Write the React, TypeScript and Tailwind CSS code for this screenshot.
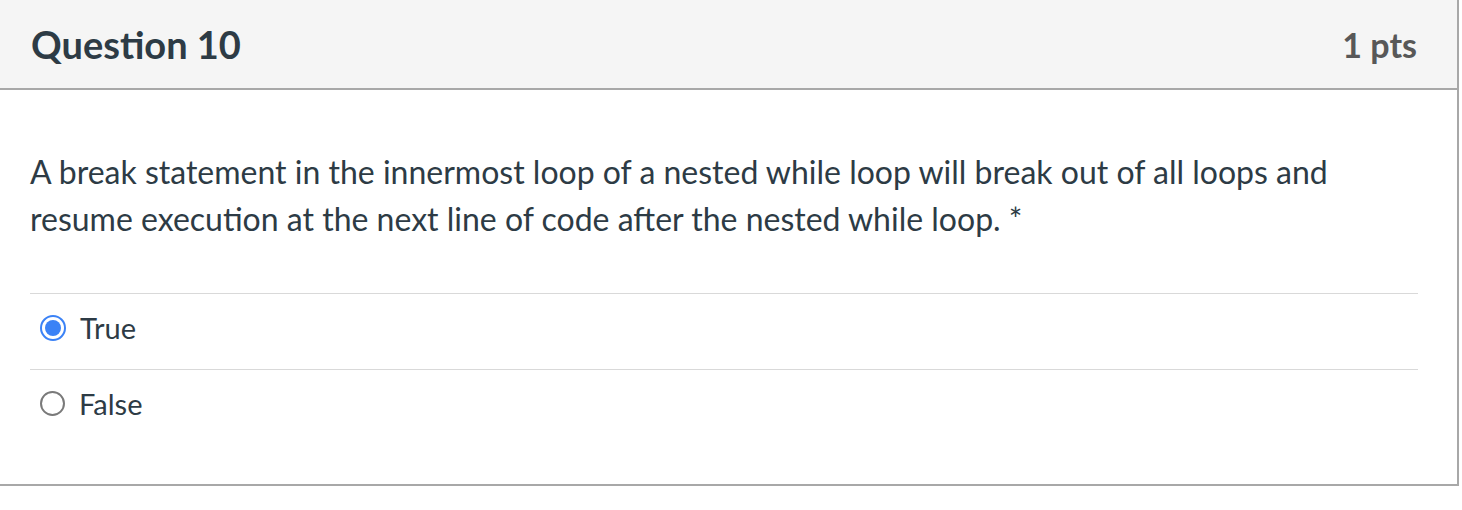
import React, { useState } from 'react';

const Radio = ({ checked }: { checked: boolean }) =>
    checked ? (
        <span className="flex h-[26px] w-[26px] shrink-0 items-center justify-center rounded-full border-[2px] border-[#3b82f6] bg-white">
            <span className="h-[16px] w-[16px] rounded-full bg-[#3b82f6]" />
        </span>
    ) : (
        <span className="h-[25px] w-[25px] shrink-0 rounded-full border-[2px] border-[#7a7a7a] bg-white" />
    );

export default function App() {
    const [answer, setAnswer] = useState('True');
    const options = ['True', 'False'];

    return (
        <div className="h-[510px] bg-white font-['Lato',sans-serif] text-[#2d3b45]">
            <div className="w-[1459px] border-r-2 border-b-2 border-[#a8a8a8]">
                <div className="flex h-[90px] items-center justify-between border-b-2 border-[#a8a8a8] bg-[#f5f5f5] pl-[31px] pr-[40px]">
                    <h2 className="text-[38px] font-bold">Question 10</h2>
                    <span className="text-[34px] font-bold text-[#585858]">1 pts</span>
                </div>
                <div className="pl-[30px] pr-[39px] pt-[58px] pb-[39px]">
                    <p className="text-[32px] leading-[47px]">
                        A break statement in the innermost loop of a nested while loop will break out of all loops and resume
                        execution at the next line of code after the nested while loop. *
                    </p>
                    <div className="mt-[51px]">
                        {options.map((opt) => (
                            <label
                                key={opt}
                                className="flex cursor-pointer items-center gap-[14px] border-t-[1.5px] border-[#d9d9d9] pl-[10px] pt-[10px] pb-[18px] text-[29px] leading-[47px]"
                                onClick={() => setAnswer(opt)}
                            >
                                <Radio checked={answer === opt} />
                                <span>{opt}</span>
                            </label>
                        ))}
                    </div>
                </div>
            </div>
        </div>
    );
}
